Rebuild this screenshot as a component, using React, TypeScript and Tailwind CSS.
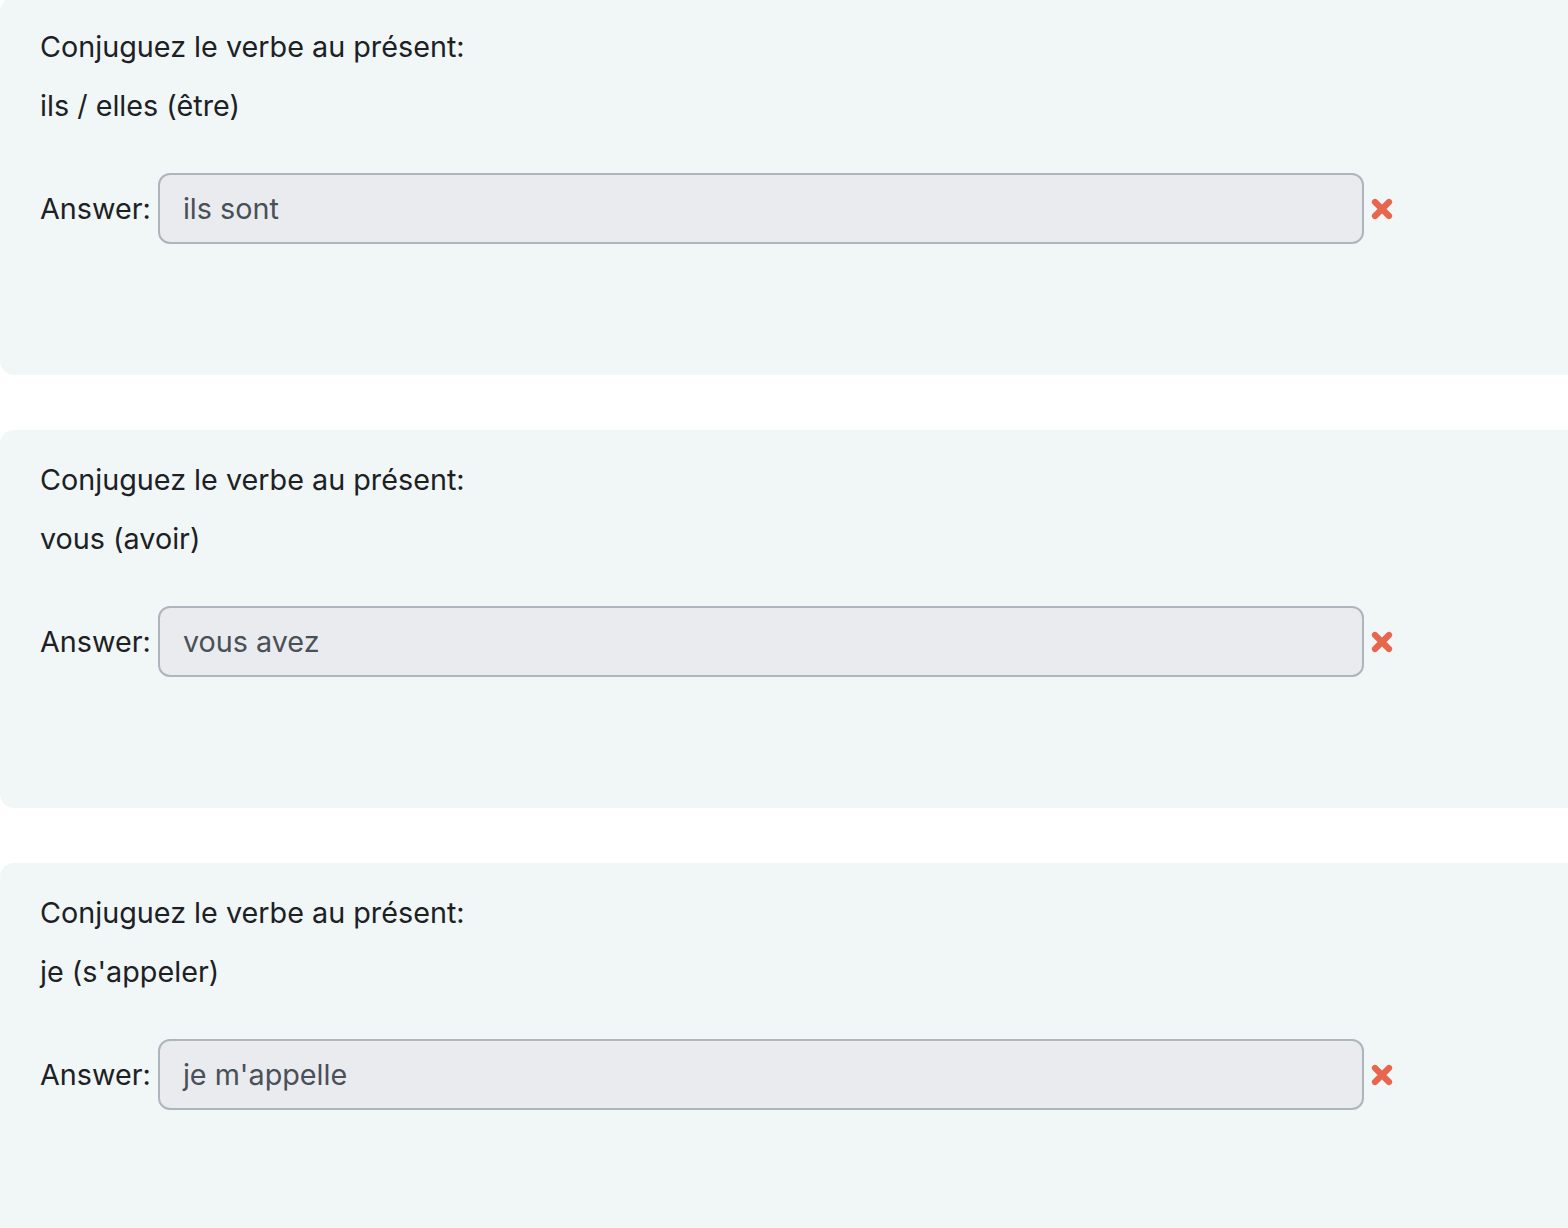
import React from "react";

const items = [
  { prompt: "ils / elles (être)", answer: "ils sont" },
  { prompt: "vous (avoir)", answer: "vous avez" },
  { prompt: "je (s'appeler)", answer: "je m'appelle" },
];

function Cross() {
  return (
    <svg width="22" height="22" viewBox="0 0 22 22" className="shrink-0">
      <path
        d="M4 4 L18 18 M18 4 L4 18"
        stroke="#e8654e"
        strokeWidth="6.2"
        strokeLinecap="round"
      />
    </svg>
  );
}

export default function App() {
  return (
    <div
      className="min-h-[1228px] bg-white overflow-hidden flex flex-col gap-[55px] text-[#1d2125]"
      style={{ fontFamily: "Inter, 'Noto Sans', sans-serif" }}
    >
      {items.map((it, i) => (
        <div
          key={i}
          className={`${i === 0 ? "mt-[-3px]" : ""} h-[378px] rounded-l-[14px] bg-[#f0f7f6] pl-[40px] pt-[29px] flex flex-col`}
        >
          <div className="text-[28.75px] leading-[42px]">Conjuguez le verbe au présent:</div>
          <div className="text-[28.75px] leading-[42px] mt-[17px]">{it.prompt}</div>
          <div className="mt-[46px] flex items-center">
            <span className="text-[28.75px] leading-[42px] mr-[7px]">Answer:</span>
            <div className="w-[1206px] h-[71px] rounded-[12px] border-2 border-[#adb5bd] bg-[#e9ebef] pl-[23px] flex items-center text-[28.75px] text-[#495057]">
              {it.answer}
            </div>
            <div className="ml-[7px]">
              <Cross />
            </div>
          </div>
        </div>
      ))}
    </div>
  );
}
